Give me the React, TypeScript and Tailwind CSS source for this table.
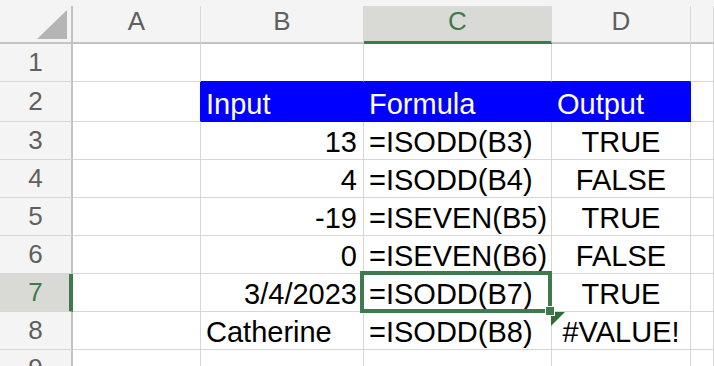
import type { ReactNode } from 'react'

type DataRow = {
  n: number
  input: string
  formula: string
  output: string
  isText?: boolean
}

const dataRows: DataRow[] = [
  { n: 3, input: '13', formula: '=ISODD(B3)', output: 'TRUE' },
  { n: 4, input: '4', formula: '=ISODD(B4)', output: 'FALSE' },
  { n: 5, input: '-19', formula: '=ISEVEN(B5)', output: 'TRUE' },
  { n: 6, input: '0', formula: '=ISEVEN(B6)', output: 'FALSE' },
  { n: 7, input: '3/4/2023', formula: '=ISODD(B7)', output: 'TRUE' },
  { n: 8, input: 'Catherine', formula: '=ISODD(B8)', output: '#VALUE!', isText: true },
]

function ColHead({ label, active }: { label: string; active?: boolean }) {
  return (
    <div
      className={
        active
          ? 'flex items-center justify-center border-r border-r-[#d8d8d8] border-b-[3px] border-b-[#3e7a4e] bg-[#d9d9d6] pb-[4px] text-[26px] text-[#3e7a4e]'
          : 'flex items-center justify-center border-r border-r-[#d8d8d8] border-b-2 border-b-[#c3c3c3] pb-[5px] text-[26px] text-[#5f5f5f]'
      }
    >
      {label}
    </div>
  )
}

function RowHead({ n, active }: { n: number; active?: boolean }) {
  return (
    <div
      className={
        active
          ? 'flex items-center justify-center border-r-4 border-r-[#3e7a4e] border-b border-b-[#d6d6d6] bg-[#d9d9d6] pl-[2px] text-[26px] text-[#3e7a4e]'
          : 'flex items-center justify-center border-r-2 border-r-[#c3c3c3] border-b border-b-[#d6d6d6] text-[26px] text-[#5f5f5f]'
      }
    >
      {n}
    </div>
  )
}

function Cell({
  children,
  className = '',
}: {
  children?: ReactNode
  className?: string
}) {
  return (
    <div
      className={`relative flex items-end border-r border-b border-[#d6d6d6] bg-white pb-[2px] text-[29px] leading-none text-black ${className}`}
    >
      {children}
    </div>
  )
}

function HeaderCell({ children }: { children: ReactNode }) {
  return (
    <div className="flex items-end border-r border-b border-[#0000ff] bg-[#0000ff] pb-[2px] pl-[5px] text-[29px] leading-none text-white">
      {children}
    </div>
  )
}

export default function App() {
  return (
    <div className="h-[366px] w-[714px] overflow-hidden bg-[#f4f4f4] pt-[6px] font-['Liberation_Sans',Arial,sans-serif]">
      <div className="grid grid-cols-[73px_128px_163px_188px_139px_1fr] grid-rows-[38px_38px_40px_repeat(7,38px)]">
        {/* column headers */}
        <div className="flex items-end justify-end border-r-2 border-b-2 border-[#c3c3c3] pr-[4px] pb-[3px]">
          <svg width="30" height="29" viewBox="0 0 30 29">
            <polygon points="30,0 30,29 0,29" fill="#b5b5b5" />
          </svg>
        </div>
        <ColHead label="A" />
        <ColHead label="B" />
        <ColHead label="C" active />
        <ColHead label="D" />
        <ColHead label="" />

        {/* row 1 */}
        <RowHead n={1} />
        <Cell />
        <Cell className="border-b-[#0000ff]" />
        <Cell className="border-b-[#0000ff]" />
        <Cell className="border-b-[#0000ff]" />
        <Cell />

        {/* row 2: blue title band */}
        <RowHead n={2} />
        <Cell className="border-r-[#0000ff]" />
        <HeaderCell>Input</HeaderCell>
        <HeaderCell>Formula</HeaderCell>
        <HeaderCell>Output</HeaderCell>
        <Cell />

        {dataRows.map((row) => (
          <Row key={row.n} row={row} />
        ))}

        {/* row 9, cut off by the window */}
        <RowHead n={9} />
        <Cell />
        <Cell />
        <Cell />
        <Cell />
        <Cell />
      </div>
    </div>
  )
}

function Row({ row }: { row: DataRow }) {
  const selected = row.n === 7
  return (
    <>
      <RowHead n={row.n} active={selected} />
      <Cell />
      <Cell className={row.isText ? 'justify-start pl-[5px]' : 'justify-end pr-[6px]'}>
        {row.input}
      </Cell>
      <Cell className="pl-[5px]">
        {row.formula}
        {selected && (
          <>
            <div className="pointer-events-none absolute -top-[3px] -right-[1px] -bottom-[2px] -left-[4px] z-10 border-4 border-[#3e7a4e]" />
            <div className="absolute -right-[4px] -bottom-[5px] z-20 h-[10px] w-[10px] border border-white bg-[#3e7a4e]" />
          </>
        )}
      </Cell>
      <Cell className="justify-center">
        {row.isText && (
          <svg className="absolute top-0 -left-[1px] z-10" width="14" height="14" viewBox="0 0 14 14">
            <polygon points="0,0 14,0 0,14" fill="#2f6d37" />
          </svg>
        )}
        {row.output}
      </Cell>
      <Cell />
    </>
  )
}
